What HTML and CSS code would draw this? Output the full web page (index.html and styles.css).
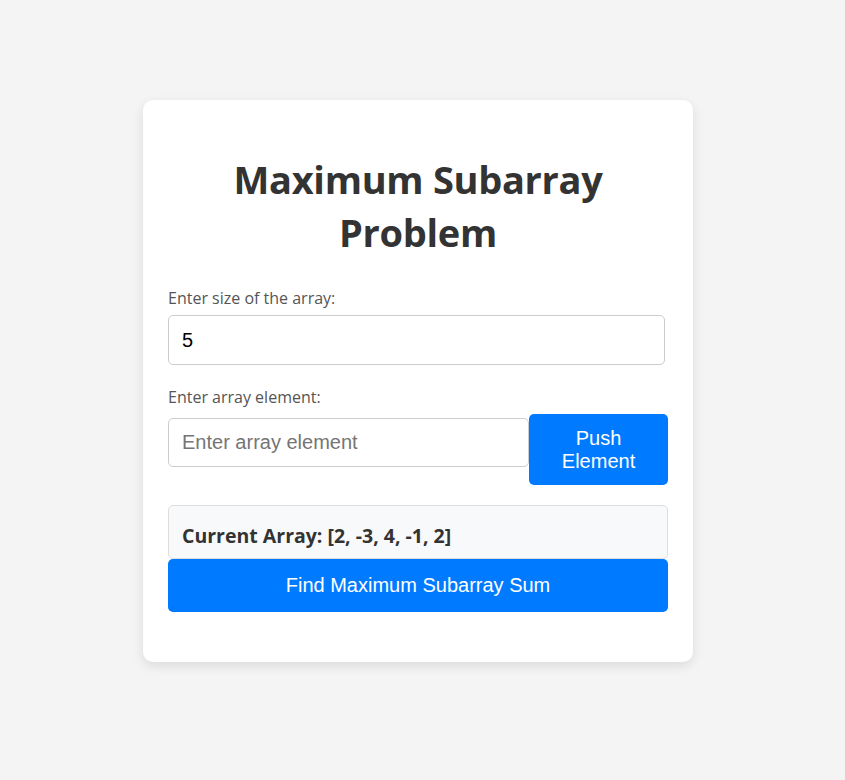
FILE: index.html
```html
<html>

<head>
    <title>Maximum Subarray Problem</title>
    <link rel="stylesheet" href="styles.css">
</head>

<body>
    <div class="container">
        <h1>Maximum Subarray Problem</h1>
        <label for="arraySize">Enter size of the array:</label>
        <input class="form-input" type="number" id="arraySize" value="5">

        <label for="arrayElement">Enter array element:</label>
        <div class="input-row">
            <input class="form-input" type="number" id="arrayElement" placeholder="Enter array element">
            <button class="btn btn-push">Push Element</button>
        </div>

        <div class="array-box">
            <strong>Current Array: [2, -3, 4, -1, 2]</strong>
        </div>
        <button class="btn btn-find">Find Maximum Subarray Sum</button>
    </div>
</body>

</html>
```

FILE: styles.css
```css
body {
    font-family: "Open Sans", sans-serif;
    background-color: #f4f4f4;
    margin: 0;
    padding: 100px 9px 100px 0;
}

.container {
    width: 500px;
    margin: 0 auto;
    padding: 25px 25px 50px;
    background-color: #ffffff;
    border-radius: 10px;
    box-shadow: 0 4px 12px rgba(0, 0, 0, 0.1);
}

h1 {
    font-size: 38px;
    letter-spacing: -0.3px;
    line-height: 53px;
    font-weight: 700;
    color: #333333;
    text-align: center;
    margin: 28px 0 29px;
}

label {
    display: block;
    font-size: 16px;
    line-height: 21px;
    color: #555555;
    margin-bottom: 6px;
}

.form-input {
    display: block;
    width: 497px;
    height: 50px;
    box-sizing: border-box;
    margin: 4px 0 22px;
    padding: 0 13px;
    font-family: "Liberation Sans", Arial, sans-serif;
    font-size: 20px;
    color: #000000;
    border: 1px solid #cccccc;
    border-radius: 5px;
    -moz-appearance: textfield;
}

.form-input::-webkit-outer-spin-button,
.form-input::-webkit-inner-spin-button {
    -webkit-appearance: none;
    margin: 0;
}

.form-input::placeholder {
    color: #757575;
}

.input-row {
    display: flex;
    align-items: flex-start;
    margin-bottom: 20px;
}

.input-row .form-input {
    width: 361px;
    height: 49px;
    margin: 4px 0 0;
}

.btn {
    font-family: "Liberation Sans", Arial, sans-serif;
    font-size: 20px;
    color: #ffffff;
    background-color: #007bff;
    border: none;
    border-radius: 5px;
    cursor: pointer;
}

.btn-push {
    width: 139px;
    height: 71px;
    line-height: 23px;
    padding: 0 12px;
}

.array-box {
    height: 54px;
    box-sizing: border-box;
    display: flex;
    align-items: center;
    padding: 6px 13px 0;
    background-color: #f8f9fa;
    border: 1px solid #dddddd;
    border-radius: 5px;
    font-size: 19.5px;
    color: #333333;
}

.btn-find {
    display: block;
    width: 500px;
    height: 53px;
}
```
